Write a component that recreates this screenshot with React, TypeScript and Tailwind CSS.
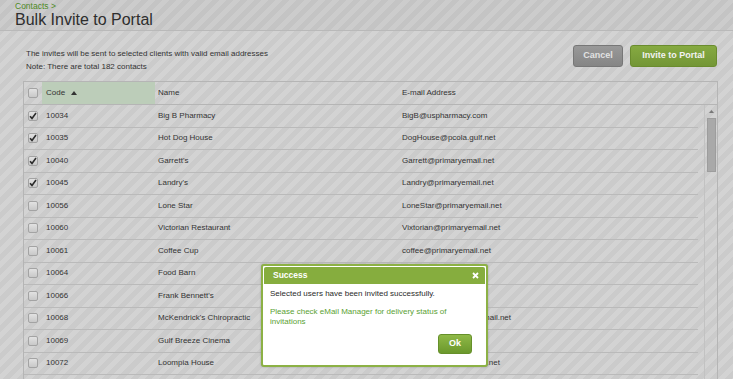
import React from "react";

type Row = { code: string; name: string; email: string; checked: boolean };

const rows: Row[] = [
  { code: "10034", name: "Big B Pharmacy", email: "BigB@uspharmacy.com", checked: true },
  { code: "10035", name: "Hot Dog House", email: "DogHouse@pcola.gulf.net", checked: true },
  { code: "10040", name: "Garrett's", email: "Garrett@primaryemail.net", checked: true },
  { code: "10045", name: "Landry's", email: "Landry@primaryemail.net", checked: true },
  { code: "10056", name: "Lone Star", email: "LoneStar@primaryemail.net", checked: false },
  { code: "10060", name: "Victorian Restaurant", email: "Vixtorian@primaryemail.net", checked: false },
  { code: "10061", name: "Coffee Cup", email: "coffee@primaryemail.net", checked: false },
  { code: "10064", name: "Food Barn", email: "foodbarn@gulf.net", checked: false },
  { code: "10066", name: "Frank Bennett's", email: "frank@pcola.net", checked: false },
  { code: "10068", name: "McKendrick's Chiropractic", email: "McKendrick@primaryemail.net", checked: false },
  { code: "10069", name: "Gulf Breeze Cinema", email: "cinema@gulf.net", checked: false },
  { code: "10072", name: "Loompia House", email: "Loompia@primaryemail.net", checked: false },
];

const Checkbox = ({ checked }: { checked: boolean }) => (
  <div className="w-[10px] h-[10px] rounded-[2px] border border-[#a3a3a3] bg-gradient-to-b from-[#e2e2e2] to-[#c8c8c8] flex items-center justify-center">
    {checked && (
      <svg width="8" height="8" viewBox="0 0 8 8">
        <path d="M1 4.2 L3 6.4 L7 1" fill="none" stroke="#2b2b2b" strokeWidth="1.6" />
      </svg>
    )}
  </div>
);

export default function App() {
  return (
    <div className="relative w-[733px] h-[379px] overflow-hidden bg-[image:repeating-linear-gradient(135deg,#cbcbcb_0px,#cbcbcb_5px,#d3d3d3_5px,#d3d3d3_10px)] font-['Liberation_Sans',Arial,sans-serif] text-[#333]">
      {/* header */}
      <div className="h-[31px] px-[15px] pt-[1px] border-b border-[#b9b9b9] bg-black/[0.03]">
        <div className="text-[8.5px] leading-[10px] text-[#4e8a24]">Contacts &gt;</div>
        <h1 className="text-[16px] leading-[18px] text-[#2e2e2e]">Bulk Invite to Portal</h1>
      </div>

      {/* intro + actions */}
      <div className="flex justify-between items-start pl-[26px] pr-[16px] mt-[14px] h-[22px]">
        <div className="pt-[2px] text-[8px] leading-[13px] text-[#333]">
          <div>The invites will be sent to selected clients with valid email addresses</div>
          <div>Note: There are total 182 contacts</div>
        </div>
        <div className="flex gap-[7px]">
          <button className="w-[50px] h-[22px] rounded-[3px] border border-[#777] bg-gradient-to-b from-[#999] to-[#858585] text-[9px] font-bold text-[#e2e2e2]">
            Cancel
          </button>
          <button className="w-[87px] h-[22px] rounded-[3px] border border-[#6a8c2e] bg-gradient-to-b from-[#86aa41] to-[#739636] text-[9px] font-bold text-[#f2f2f2]">
            Invite to Portal
          </button>
        </div>
      </div>

      {/* table */}
      <div className="ml-[23px] w-[695px] mt-[14px] border border-[#b5b5b5] h-[320px]">
        <div className="flex h-[23px] border-b border-[#b5b5b5] text-[8px] items-center">
          <div className="w-[18px] h-full flex items-center pl-[4px]">
            <Checkbox checked={false} />
          </div>
          <div className="w-[113px] h-full flex items-center pl-[4px] bg-[#bccdb9]">
            <span>Code</span>
            <svg className="ml-[6px]" width="6" height="4" viewBox="0 0 6 4">
              <path d="M0 4 L3 0 L6 4 Z" fill="#333" />
            </svg>
          </div>
          <div className="w-[243px] pl-[3px]">Name</div>
          <div className="flex-1 pl-[4px]">E-mail Address</div>
        </div>
        <div className="flex">
          <div className="w-[674px]">
            {rows.map((r) => (
              <div
                key={r.code}
                className="flex items-center h-[22.5px] border-b border-[#bababa] text-[8px]"
              >
                <div className="w-[18px] pl-[4px]">
                  <Checkbox checked={r.checked} />
                </div>
                <div className="w-[113px] pl-[4px]">{r.code}</div>
                <div className="w-[243px] pl-[3px]">{r.name}</div>
                <div className="flex-1 pl-[4px]">{r.email}</div>
              </div>
            ))}
          </div>
          <div className="ml-[6px] w-[13px] h-[300px] border-l border-[#c2c2c2] flex flex-col items-center">
            <svg className="mt-[5px]" width="5" height="3" viewBox="0 0 5 3">
              <path d="M0 3 L2.5 0 L5 3 Z" fill="#777" />
            </svg>
            <div className="mt-[5px] w-[9px] h-[54px] bg-[#a9a9a9] border border-[#9d9d9d]" />
          </div>
        </div>
      </div>

      {/* success dialog */}
      <div className="absolute left-[261px] top-[264px] w-[227px] h-[103px] rounded-[3px] border-2 border-[#8cb145] bg-white shadow-[0_0_2px_rgba(0,0,0,0.25)]">
        <div className="m-[1px] h-[17px] rounded-t-[2px] bg-[#86ad3e] flex items-center justify-between pl-[9px] pr-[6px]">
          <span className="text-[8.5px] font-bold text-white">Success</span>
          <svg width="7" height="7" viewBox="0 0 7 7">
            <path d="M1 1 L6 6 M6 1 L1 6" stroke="#fff" strokeWidth="1.8" />
          </svg>
        </div>
        <div className="px-[7px] pt-[3px] text-[8px]">
          <div className="leading-[11px] text-[#2a2a2a]">Selected users have been invited successfully.</div>
          <div className="mt-[8px] leading-[10px] text-[#5aa133] w-[190px]">
            Please check eMail Manager for delivery status of invitations
          </div>
        </div>
        <div className="flex justify-end pr-[14px] mt-[7px]">
          <button className="w-[34px] h-[20px] rounded-[3px] border border-[#66902a] bg-gradient-to-b from-[#8fb947] to-[#6b982c] text-[9px] font-bold text-white">
            Ok
          </button>
        </div>
      </div>
    </div>
  );
}
